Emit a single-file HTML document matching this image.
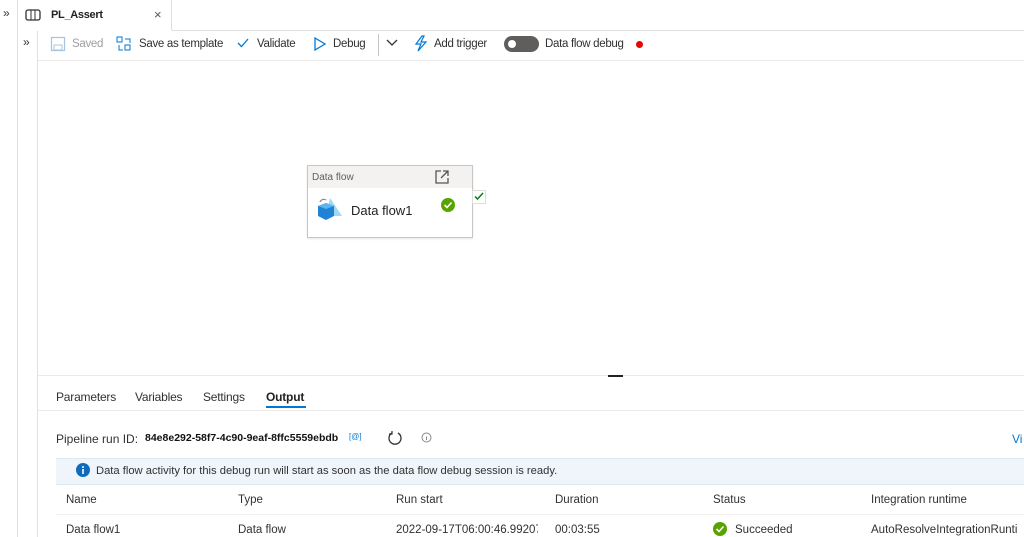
<!DOCTYPE html>
<html><head><style>
body{margin:0;width:1024px;height:537px;overflow:hidden;background:#fff;font-family:"Liberation Sans",sans-serif;color:#323130;position:relative}
.a{position:absolute;white-space:nowrap}
</style></head><body>
<div class="a" style="left:0;top:0;width:17px;height:537px;border-right:1px solid #e1dfdd"></div>
<div class="a" style="left:3px;top:6px;font-size:12px;color:#333">»</div>
<div class="a" style="left:18px;top:30px;width:19px;height:507px;border-right:1px solid #e1dfdd"></div>
<div class="a" style="left:23px;top:35px;font-size:12px;color:#333">»</div>
<div class="a" style="left:18px;top:0;width:1006px;height:30px;border-bottom:1px solid #e1dfdd"></div>
<div class="a" style="left:18px;top:0;width:153px;height:30px;background:#fff;border-right:1px solid #e1dfdd;border-bottom:1px solid #fff"></div>
<svg class="a" style="left:25px;top:9px" width="16" height="12"><rect x="1" y="1" width="14" height="10" rx="2" fill="none" stroke="#333" stroke-width="1.3"/><line x1="6" y1="1" x2="6" y2="11" stroke="#333"/><line x1="10" y1="1" x2="10" y2="11" stroke="#333"/></svg>
<div class="a" style="left:51px;top:9px;font-size:11px;font-weight:bold;color:#222;letter-spacing:-0.3px">PL_Assert</div>
<div class="a" style="left:154px;top:7px;font-size:13px;color:#555">×</div>
<div class="a" style="left:38px;top:60px;width:986px;height:1px;background:#edebe9"></div>
<svg class="a" style="left:50px;top:36px" width="16" height="16"><rect x="1.5" y="1.5" width="13" height="13" fill="none" stroke="#a6c4e0" stroke-width="1.2"/><rect x="4" y="9" width="8" height="5" fill="none" stroke="#a6c4e0"/></svg>
<div class="a" style="left:72px;top:38px;font-size:11.5px;color:#a19f9d;letter-spacing:-0.3px">Saved</div>
<svg class="a" style="left:116px;top:36px" width="16" height="16"><rect x="1" y="1" width="5" height="5" fill="none" stroke="#0078d4"/><rect x="9" y="9" width="5" height="5" fill="none" stroke="#0078d4"/><path d="M9 3h5v4M3 9v5h4" fill="none" stroke="#0078d4"/></svg>
<div class="a" style="left:139px;top:38px;font-size:11.5px;letter-spacing:-0.3px">Save as template</div>
<svg class="a" style="left:236px;top:37px" width="14" height="12"><path d="M2 6l3.5 3.5L12 2" fill="none" stroke="#0078d4" stroke-width="1.3"/></svg>
<div class="a" style="left:257px;top:38px;font-size:11.5px;letter-spacing:-0.3px">Validate</div>
<svg class="a" style="left:313px;top:36px" width="14" height="16"><path d="M2 2l10 6-10 6z" fill="none" stroke="#0078d4" stroke-width="1.3"/></svg>
<div class="a" style="left:333px;top:38px;font-size:11.5px;letter-spacing:-0.3px">Debug</div>
<div class="a" style="left:378px;top:34px;width:1px;height:22px;background:#c8c6c4"></div>
<svg class="a" style="left:386px;top:39px" width="12" height="8"><path d="M1 1l5 5 5-5" fill="none" stroke="#333" stroke-width="1.3"/></svg>
<svg class="a" style="left:413px;top:35px" width="16" height="18"><path d="M9 1L3 9h5l-3 7 8-9H8l3-6z" fill="none" stroke="#0078d4" stroke-width="1.2"/></svg>
<div class="a" style="left:434px;top:38px;font-size:11.5px;letter-spacing:-0.3px">Add trigger</div>
<div class="a" style="left:504px;top:36px;width:35px;height:16px;border-radius:8px;background:#605e5c"></div>
<div class="a" style="left:508px;top:40px;width:8px;height:8px;border-radius:50%;background:#fff"></div>
<div class="a" style="left:545px;top:38px;font-size:11.5px;letter-spacing:-0.3px">Data flow debug</div>
<div class="a" style="left:636px;top:41px;width:7px;height:7px;border-radius:50%;background:#e00"></div>
<div class="a" style="left:307px;top:165px;width:164px;height:71px;border:1px solid #c8c6c4;background:#fff;box-shadow:0 1px 2px rgba(0,0,0,.1)"></div>
<div class="a" style="left:308px;top:166px;width:164px;height:22px;background:#f3f2f1"></div>
<div class="a" style="left:312px;top:172px;font-size:10px;color:#605e5c">Data flow</div>
<svg class="a" style="left:434px;top:169px" width="16" height="16"><path d="M7 2H2v12h12V9M9 2h5v5M14 2L7 9" fill="none" stroke="#555" stroke-width="1.3"/></svg>
<svg class="a" style="left:314px;top:196px" width="30" height="28"><path d="M16 2l12 18H12z" fill="#9fd8f2"/><path d="M4 10l8-3 8 3v10l-8 4-8-4z" fill="#1f82d6"/><path d="M4 10l8 3 8-3-8-3z" fill="#5fb4f0"/><path d="M6 6a4 4 0 0 1 6-2" fill="none" stroke="#888" stroke-width="1.2"/></svg>
<div class="a" style="left:351px;top:203px;font-size:13px;color:#222">Data flow1</div>
<svg class="a" style="left:441px;top:198px" width="14" height="14"><circle cx="7" cy="7" r="7" fill="#57a300"/><path d="M3.5 7l2.5 2.5L10.5 4.5" fill="none" stroke="#fff" stroke-width="1.6"/></svg>
<div class="a" style="left:472px;top:190px;width:12px;height:12px;background:#fff;border:1px solid #ddd"></div>
<svg class="a" style="left:474px;top:192px" width="10" height="9"><path d="M1 4.5l2.5 2.5L9 1" fill="none" stroke="#107c10" stroke-width="1.5"/></svg>
<div class="a" style="left:38px;top:375px;width:986px;height:1px;background:#edebe9"></div>
<div class="a" style="left:608px;top:375px;width:15px;height:2px;background:#222"></div>
<div class="a" style="left:56px;top:390px;font-size:12px;letter-spacing:-0.2px">Parameters</div>
<div class="a" style="left:135px;top:390px;font-size:12px;letter-spacing:-0.2px">Variables</div>
<div class="a" style="left:203px;top:390px;font-size:12px;letter-spacing:-0.2px">Settings</div>
<div class="a" style="left:266px;top:390px;font-size:12px;font-weight:bold;color:#222;letter-spacing:-0.2px">Output</div>
<div class="a" style="left:266px;top:406px;width:40px;height:2px;background:#0078d4"></div>
<div class="a" style="left:38px;top:410px;width:986px;height:1px;background:#edebe9"></div>
<div class="a" style="left:56px;top:432px;font-size:12px">Pipeline run ID:</div>
<div class="a" style="left:145px;top:432px;font-size:10.5px;font-weight:bold;color:#111">84e8e292-58f7-4c90-9eaf-8ffc5559ebdb</div>
<div class="a" style="left:349px;top:432px;font-size:8px;color:#0078d4">[@]</div>
<svg class="a" style="left:387px;top:430px" width="16" height="16"><path d="M5 3A6 6 0 1 0 11 3" fill="none" stroke="#333" stroke-width="1.3"/><path d="M5 1v3H2" fill="none" stroke="#333" stroke-width="1.2"/></svg>
<svg class="a" style="left:421px;top:432px" width="11" height="11"><circle cx="5.5" cy="5.5" r="4.5" fill="none" stroke="#888"/><line x1="5.5" y1="4.5" x2="5.5" y2="8" stroke="#888"/></svg>
<div class="a" style="left:1012px;top:432px;font-size:12px;color:#0078d4">Vi</div>
<div class="a" style="left:56px;top:458px;width:968px;height:25px;background:#eff5fb;border-top:1px solid #dde8f2;border-bottom:1px solid #dde8f2"></div>
<svg class="a" style="left:76px;top:463px" width="14" height="14"><circle cx="7" cy="7" r="7" fill="#0f6cbd"/><rect x="6.2" y="6" width="1.6" height="5" fill="#fff"/><circle cx="7" cy="4" r="1" fill="#fff"/></svg>
<div class="a" style="left:96px;top:465px;font-size:11.2px">Data flow activity for this debug run will start as soon as the data flow debug session is ready.</div>
<div class="a" style="left:66px;top:494px;font-size:11.5px">Name</div>
<div class="a" style="left:238px;top:494px;font-size:11.5px">Type</div>
<div class="a" style="left:396px;top:494px;font-size:11.5px">Run start</div>
<div class="a" style="left:555px;top:494px;font-size:11.5px">Duration</div>
<div class="a" style="left:713px;top:494px;font-size:11.5px">Status</div>
<div class="a" style="left:871px;top:494px;font-size:11.5px">Integration runtime</div>
<div class="a" style="left:56px;top:514px;width:968px;height:1px;background:#f3f2f1"></div>
<div class="a" style="left:66px;top:524px;font-size:11.5px">Data flow1</div>
<div class="a" style="left:238px;top:524px;font-size:11.5px">Data flow</div>
<div class="a" style="left:396px;top:524px;font-size:11.5px;width:142px;overflow:hidden">2022-09-17T06:00:46.9920786</div>
<div class="a" style="left:555px;top:524px;font-size:11.5px">00:03:55</div>
<svg class="a" style="left:713px;top:522px" width="14" height="14"><circle cx="7" cy="7" r="7" fill="#57a300"/><path d="M3.5 7l2.5 2.5L10.5 4.5" fill="none" stroke="#fff" stroke-width="1.6"/></svg>
<div class="a" style="left:735px;top:524px;font-size:11.5px">Succeeded</div>
<div class="a" style="left:871px;top:524px;font-size:11.5px">AutoResolveIntegrationRunti</div>
</body></html>
